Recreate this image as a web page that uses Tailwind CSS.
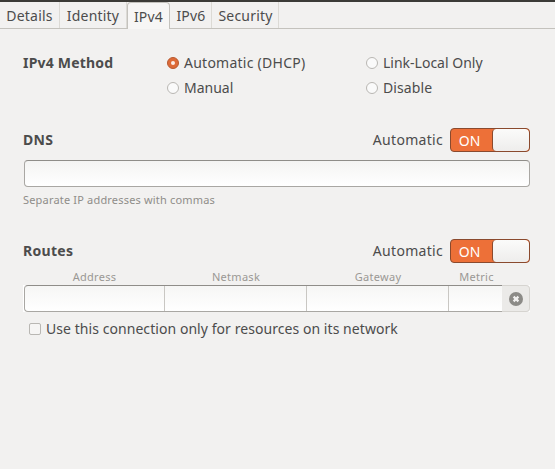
<!DOCTYPE html>
<html lang="en">
<head>
    <meta charset="UTF-8">
    <title>IPv4 Settings</title>
    <script src="https://cdn.jsdelivr.net/npm/@tailwindcss/browser@4"></script>
</head>
<body class="bg-[#f2f1f0] text-[#4c4c4c] text-[14px] font-['Noto_Sans',sans-serif] overflow-hidden">
<div class="w-[555px] h-[469px] flex flex-col">
    <div class="h-[2px] bg-[#3c3b37]"></div>

    <!-- Tabs -->
    <div class="h-[27px] flex items-end border-b border-[#c4c2bd] tracking-[0.2px]">
        <div class="w-[60px] h-[26px] flex items-center justify-center border-r border-[#dcdad5]">Details</div>
        <div class="w-[67px] h-[26px] flex items-center justify-center border-r border-[#dcdad5]">Identity</div>
        <div class="w-[43px] h-[27px] -mb-px flex items-center justify-center bg-[#f7f6f5] border border-b-0 border-[#c4c2bd] rounded-t-[4px]">IPv4</div>
        <div class="w-[42px] h-[26px] pl-px flex items-center justify-center border-r border-[#dcdad5]">IPv6</div>
        <div class="w-[67px] h-[26px] pl-px flex items-center justify-center border-r border-[#dcdad5]">Security</div>
    </div>

    <div class="pl-[23px] pr-[25px] flex flex-col">
        <!-- Method -->
        <div class="mt-[21px] flex">
            <div class="w-[144px] h-[25px] flex items-center font-bold tracking-[0.2px]">IPv4 Method</div>
            <div class="grid grid-cols-[199px_1fr] auto-rows-[25px] items-center">
                <label class="flex items-center gap-[5px] tracking-[0.25px]">
                    <span class="w-[12px] h-[12px] rounded-full bg-[#dd6a38] border border-[#b85a30] flex items-center justify-center"><span class="w-[4px] h-[4px] rounded-full bg-[#fbeee8]"></span></span>
                    Automatic (DHCP)
                </label>
                <label class="flex items-center gap-[5px]">
                    <span class="w-[12px] h-[12px] rounded-full bg-[#fafafa] border border-[#b9b7b3]"></span>
                    Link-Local Only
                </label>
                <label class="flex items-center gap-[5px]">
                    <span class="w-[12px] h-[12px] rounded-full bg-[#fafafa] border border-[#b9b7b3]"></span>
                    Manual
                </label>
                <label class="flex items-center gap-[5px] tracking-[0.1px]">
                    <span class="w-[12px] h-[12px] rounded-full bg-[#fafafa] border border-[#b9b7b3]"></span>
                    Disable
                </label>
            </div>
        </div>

        <!-- DNS -->
        <div class="mt-[28px] h-[24px] flex items-center justify-between">
            <span class="pb-[2px] font-bold tracking-[0.3px]">DNS</span>
            <div class="flex items-center gap-[7px]">
                <span class="pb-[2px] tracking-[0.3px]">Automatic</span>
                <div class="w-[80px] h-[24px] flex rounded-[4px] border border-[#8a4a2e] bg-[#ed7038] overflow-hidden">
                    <span class="w-[41px] pr-[4px] flex items-center justify-center text-white">ON</span>
                    <span class="flex-1 bg-gradient-to-b from-[#fbfbfa] to-[#eeedec] border-l border-[#8a4a2e] rounded-[4px]"></span>
                </div>
            </div>
        </div>
        <div class="mt-[8px] ml-px h-[27px] rounded-[4px] border border-[#a9a7a3] border-t-[#8f8d89] bg-gradient-to-b from-[#f4f4f3] to-[#ffffff]"></div>
        <div class="mt-[5px] h-[16px] flex items-center text-[11px] text-[#8f8d89] tracking-[0.18px]">Separate IP addresses with commas</div>

        <!-- Routes -->
        <div class="mt-[31px] h-[24px] flex items-center justify-between">
            <span class="pb-[2px] font-bold tracking-[0.3px]">Routes</span>
            <div class="flex items-center gap-[7px]">
                <span class="pb-[2px] tracking-[0.3px]">Automatic</span>
                <div class="w-[80px] h-[24px] flex rounded-[4px] border border-[#8a4a2e] bg-[#ed7038] overflow-hidden">
                    <span class="w-[41px] pr-[4px] flex items-center justify-center text-white">ON</span>
                    <span class="flex-1 bg-gradient-to-b from-[#fbfbfa] to-[#eeedec] border-l border-[#8a4a2e] rounded-[4px]"></span>
                </div>
            </div>
        </div>
        <div class="mt-[6px] h-[16px] ml-px flex text-[11px] text-[#9a9894] text-center tracking-[0.3px]">
            <div class="w-[141px]">Address</div>
            <div class="w-[142px]">Netmask</div>
            <div class="w-[142px]">Gateway</div>
            <div class="w-[55px]">Metric</div>
        </div>
        <div class="h-[27px] flex bg-white">
            <div class="ml-px w-[478px] flex rounded-l-[4px] border border-r-0 border-[#a9a7a3] border-t-[#8f8d89] bg-gradient-to-b from-[#f6f6f5] to-[#ffffff]">
                <div class="w-[140px] border-r border-[#c9c7c3]"></div>
                <div class="w-[142px] border-r border-[#c9c7c3]"></div>
                <div class="w-[142px] border-r border-[#c9c7c3]"></div>
                <div class="flex-1"></div>
            </div>
            <div class="flex-1 flex items-center justify-center rounded-r-[4px] border border-l-0 border-[#d6d4d0] bg-[#ebeae8]">
                <svg class="w-[14px] h-[14px]" viewBox="0 0 14 14">
                    <circle cx="7" cy="7" r="7" fill="#8c8b87"/>
                    <path d="M4.6 4.6l4.8 4.8M9.4 4.6l-4.8 4.8" stroke="#f2f1f0" stroke-width="2.2" fill="none"/>
                </svg>
            </div>
        </div>
        <label class="mt-[8px] ml-[6px] h-[18px] flex items-center gap-[5px] tracking-[0.06px]">
            <span class="w-[12px] h-[12px] rounded-[2px] bg-[#f6f5f4] border border-[#b9b7b3]"></span>
            <span class="pb-[2px]">Use this connection only for resources on its network</span>
        </label>
    </div>
</div>
</body>
</html>
